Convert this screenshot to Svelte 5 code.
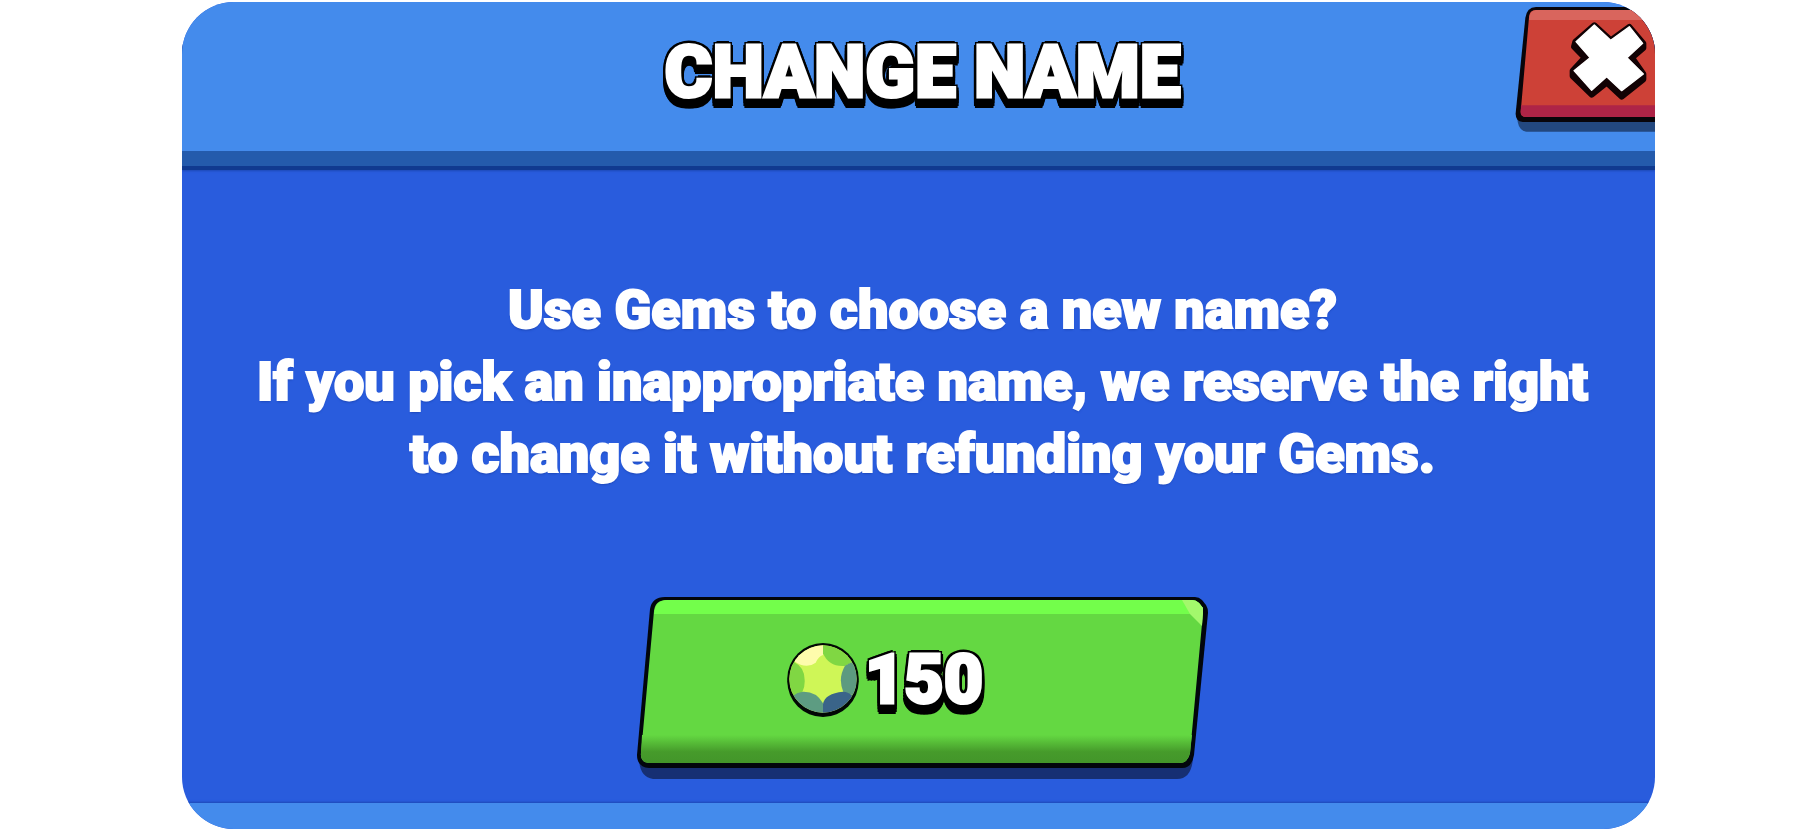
<script>
	export let title = 'Change name';
	export let price = 150;

	let open = true;

	const lines = [
		'Use Gems to choose a new name?',
		'If you pick an inappropriate name, we reserve the right',
		'to change it without refunding your Gems.'
	];

	const close = () => (open = false);
</script>

<main>
	{#if open}
		<div class="dialog" role="dialog" aria-labelledby="dialog-title">
			<header>
				<h1 id="dialog-title">{title}</h1>
				<button class="close" type="button" aria-label="Close" on:click={close}>
					<svg viewBox="105 15 420 384" aria-hidden="true">
						<path fill="#23487f" d="M113 340H540V395H140Q118 392 113 365Z" />
						<path fill="#08050a" d="M136 54Q140 22 168 21H560V366H128Q106 364 107 340Z" />
						<path fill="#cd4137" d="M147 52Q148 30 168 30H560V351H136Q122 350 122 336Z" />
						<path fill="#d9655d" d="M147 60Q148 30 168 30H560V60Z" />
						<path fill="#ae2447" d="M123 316H560V351H136Q122 350 122 336Z" />
						<g stroke-linejoin="round">
							<path
								fill="#120204"
								stroke="#120204"
								stroke-width="18"
								d="M343 76L392 121L448 81L490 130V144L456 173L490 222V238L425 290L380 248L335 284L278 228V212L314 173L282 140L286 125Z"
							/>
							<path
								fill="#fff"
								stroke="#fff"
								stroke-width="4"
								d="M343 75L392 121L448 80L488 130L441 173L490 222L425 272L380 230L335 271L282 212L330 173L288 125Z"
							/>
						</g>
					</svg>
				</button>
			</header>

			<section>
				<p>
					{#each lines as line}
						<span>{line}</span>
					{/each}
				</p>

				<button class="buy" type="button">
					<svg class="plate" viewBox="0 0 572 183" aria-hidden="true">
						<defs>
							<linearGradient id="shade" x1="0" y1="0" x2="0" y2="1">
								<stop offset="0" stop-color="#64d842" />
								<stop offset="0.6" stop-color="#469b2b" />
								<stop offset="1" stop-color="#43952a" />
							</linearGradient>
						</defs>
						<path fill="#162f73" d="M2 160H556Q555 182 540 182H16Q2 180 2 160Z" />
						<path fill="#02060c" d="M13 12Q15 0 28 0H558Q562 0 565 3L569 8Q571 11 571 16L557 158Q555 171 545 171H12Q0 170 0 158Z" />
						<path fill="#64d842" d="M17 14Q18 3 30 3H555Q559 3 562 6L566 11V16L553 156Q551 166 542 166H12Q3 165 4 156Z" />
						<path fill="#73fe4b" d="M17 17Q18 3 30 3H555Q559 3 562 6L566 11V17Z" />
						<path fill="url(#shade)" d="M5 138H555L553 156Q551 166 542 166H12Q3 165 4 156Z" />
						<path fill="#a3f86c" d="M545 3H555Q559 3 562 6L566 11V16L565 29L553 17Z" />
					</svg>
					<svg class="gem" viewBox="51 36 222 228" aria-hidden="true">
						<defs>
							<clipPath id="disc"><circle cx="162" cy="147" r="101" /></clipPath>
						</defs>
						<circle cx="162" cy="154" r="107" fill="#020805" />
						<circle cx="162" cy="146" r="107" fill="#020805" />
						<g clip-path="url(#disc)">
							<path fill="#cff657" d="M50 40H270V260H50Z" />
							<path fill="#fefcac" d="M162 30V75Q148 80 140 98Q112 119 76 94L50 80V30Z" />
							<path fill="#80d743" d="M162 30V70Q180 112 228 108L260 90V30Z" />
							<path fill="#5c9a80" d="M270 88L242 100L228 107Q206 145 223 186L252 196L280 190Z" />
							<path fill="#3a6489" d="M260 200L248 196Q238 185 222 185Q168 190 162 222V260H260Z" />
							<path fill="#5d9c82" d="M162 260V220Q138 175 80 188L60 205V260Z" />
							<path fill="#80d743" d="M50 80L76 97Q107 112 107 150Q108 172 100 186Q86 186 76 195L50 205Z" />
						</g>
					</svg>
					<span class="price">{price}</span>
				</button>
			</section>

			<footer></footer>
		</div>
	{/if}
</main>

<style>
:global(body) {
	margin: 0;
	background: #fff;
}

main {
	box-sizing: border-box;
	min-height: 100vh;
	display: flex;
	padding: 2px 145px 0 182px;
	font-family: Roboto, "Open Sans", sans-serif;
	font-weight: 900;
	color: #fff;
}

.dialog {
	flex: 1;
	display: flex;
	flex-direction: column;
	border-radius: 52px;
	overflow: hidden;
	background: #295cdd;
}

header {
	display: grid;
	grid-template-columns: 1fr auto 1fr;
	height: 149px;
	padding-left: 8px;
	background: #448bec;
	border-bottom: 15px solid #245bac;
	box-shadow: 0 4px 0 #103a90, 0 5px 2px #1c48b4;
}

h1 {
	grid-column: 2;
	align-self: start;
	margin: 30px 0 0;
	font-size: 73px;
	line-height: 80px;
	font-weight: 900;
	text-transform: uppercase;
}

h1,
.price {
	-webkit-text-stroke: 3px #fff;
	text-shadow:
		-4px 0 #000, 4px 0 #000, 0 -4px #000,
		-3px -3px #000, 3px -3px #000,
		-4px 3px #000, 4px 3px #000,
		-4px 6px #000, 4px 6px #000, 0 6px #000,
		-4px 9px #000, 4px 9px #000, 0 9px #000,
		-3px 11px #000, 3px 11px #000, 0 11px #000;
}

button {
	padding: 0;
	border: 0;
	background: none;
	font: inherit;
	color: inherit;
	cursor: pointer;
}

.close {
	grid-column: 3;
	justify-self: end;
	align-self: start;
	padding-top: 3px;
}

.close svg {
	display: block;
	width: 140px;
	height: 128px;
}

section {
	flex: 1;
	display: flex;
	flex-direction: column;
	align-items: center;
	justify-content: space-between;
	padding: 108px 24px 23px 32px;
}

p {
	margin: 0;
	font-size: 54px;
	line-height: 72px;
	text-align: center;
	-webkit-text-stroke: 2px #fff;
	text-shadow: 0 2px 2px #1d48bb;
}

p span {
	display: block;
}

.buy {
	position: relative;
	display: flex;
	align-items: center;
	justify-content: center;
	gap: 5px;
	width: 572px;
	height: 183px;
	padding: 0 76px 18px 0;
	box-sizing: border-box;
}

.plate {
	position: absolute;
	inset: 0;
}

.gem {
	position: relative;
	width: 74px;
	height: 76px;
}

.price {
	position: relative;
	font-size: 68px;
	line-height: 80px;
}

footer {
	height: 26px;
	background: #448bec;
	box-shadow: 0 -1px 2px #1c48b4;
}
</style>
